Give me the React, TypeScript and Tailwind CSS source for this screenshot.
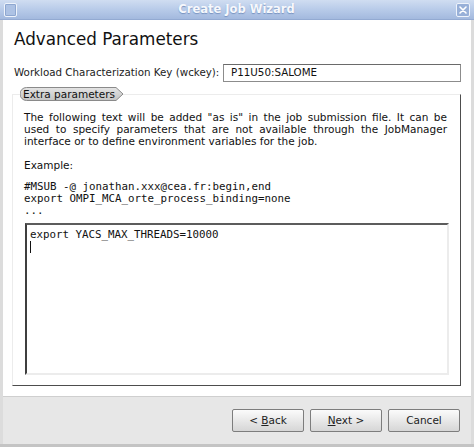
const sans = { fontFamily: '"DejaVu Sans", "Liberation Sans", sans-serif' };
const mono = { fontFamily: '"DejaVu Sans Mono", "Liberation Mono", monospace' };

function TitleBar() {
  return (
    <div className="relative flex h-[20px] shrink-0 items-center justify-between border-b border-[#93aad2] bg-gradient-to-b from-[#d0ddf1] via-[#b8cbe9] to-[#a3b9de] px-[4px]">
      <div className="h-[14px] w-[13px] rounded-[2px] border border-[#eef3fb] bg-[#adc2e4] shadow-[inset_0_0_0_1px_#8ea7d0]" />
      <span className="text-[11.5px] font-bold text-[#f6f8fc] [text-shadow:0_1px_1px_#7893c0]">Create Job Wizard</span>
      <div className="flex h-[14px] w-[14px] items-center justify-center rounded-[2px] border border-[#eef3fb] bg-[#98b0d8]">
        <svg width="10" height="10" viewBox="0 0 10 10">
          <path d="M2 2 L8 8 M8 2 L2 8" stroke="#ffffff" strokeWidth="1.6" strokeLinecap="round" />
        </svg>
      </div>
    </div>
  );
}

function WizardButton({ children }: { children: React.ReactNode }) {
  return (
    <button
      type="button"
      className="flex h-[23px] w-[72px] items-center justify-center rounded-[2px] border border-[#7d7d7d] bg-gradient-to-b from-[#fbfbfb] to-[#d6d6d6] text-[10.5px] text-[#222]"
    >
      <span className="whitespace-pre">{children}</span>
    </button>
  );
}

function ExtraTab() {
  return (
    <div className="relative z-10 ml-[8px] flex h-[14px] w-[104px] items-center pl-[3px]">
      <svg className="absolute inset-0" width="104" height="14" viewBox="0 0 104 14">
        <defs>
          <linearGradient id="tabg" x1="0" y1="0" x2="0" y2="1">
            <stop offset="0" stopColor="#e4e4e4" />
            <stop offset="1" stopColor="#c4c4c4" />
          </linearGradient>
        </defs>
        <path d="M6.5 0.5 H96 L103 7 L96 13.5 H6.5 A6.5 6.5 0 0 1 6.5 0.5 Z" fill="url(#tabg)" stroke="#8a8a8a" />
      </svg>
      <span className="relative text-[10.5px] leading-none text-[#111]">Extra parameters</span>
    </div>
  );
}

// lines are broken as in the original label, first two stretched to full width
const lines = [
  'The following text will be added "as is" in the job submission file. It can be',
  "used to specify parameters that are not available through the JobManager",
];

export default function App() {
  return (
    <div className="flex h-[447px] w-[474px] flex-col overflow-hidden bg-white" style={sans}>
      <TitleBar />
      <div className="flex flex-1 flex-col border-x-[3px] border-[#dcdcdc] bg-white">
        <div className="flex h-[39px] items-center pl-[11px]">
          <h1 className="text-[16.8px] text-[#111]">Advanced Parameters</h1>
        </div>

        <div className="mt-[5px] flex h-[18px] items-center pl-[11px] pr-[10px]">
          <span className="text-[10.3px] text-[#222]">Workload Characterization Key (wckey):</span>
          <div className="ml-auto flex h-[18px] w-[238px] items-center border border-[#8c8c8c] border-t-[#6a6a6a] bg-white pl-[7px] text-[10.3px] text-[#111]">
            P11U50:SALOME
          </div>
        </div>

        <div className="mt-[5px] ml-[9px] w-[449px]">
          <ExtraTab />
          <div className="-mt-[7px] h-[292px] border border-[#ececec] border-r-[#4d4d4d] border-b-[#4d4d4d] pl-[11px] pr-[12px] pt-[16px]">
            <div className="w-[423px] text-[10.5px] leading-[12px] text-[#111]">
              {lines.map((l) => (
                <div key={l} className="text-justify [text-align-last:justify]">
                  {l}
                </div>
              ))}
              <div>interface or to define environment variables for the job.</div>
            </div>
            <p className="mt-[12px] text-[10.5px] leading-[12px] text-[#111]">Example:</p>
            <div className="mt-[10px] text-[10.8px] leading-[12px] text-[#111]" style={mono}>
              <div>#MSUB -@ jonathan.xxx@cea.fr:begin,end</div>
              <div>export OMPI_MCA_orte_process_binding=none</div>
              <div>...</div>
            </div>
            <div
              className="mt-[6px] ml-[1px] h-[152px] w-[424px] border-2 border-t-[#5c5c5c] border-l-[#3f3f3f] border-r-[#ececec] border-b-[#ececec] bg-white pl-[3px] pt-[4px] text-[10.8px] leading-[12px] text-[#111]"
              style={mono}
            >
              <div>export YACS_MAX_THREADS=10000</div>
              <div className="h-[12px] w-px bg-[#111]" />
            </div>
          </div>
        </div>

        <div className="mt-[10px] flex-1 border-t border-[#cfcfcf] bg-[#e7e7e7]">
          <div className="flex justify-end gap-[6px] pr-[11px] pt-[12px]">
            <WizardButton>
              {"< "}
              <span className="underline">B</span>
              {"ack"}
            </WizardButton>
            <WizardButton>
              <span className="underline">N</span>
              {"ext >"}
            </WizardButton>
            <WizardButton>Cancel</WizardButton>
          </div>
        </div>
      </div>
      <div className="h-[3px] shrink-0 bg-[#c4c4c4]" />
    </div>
  );
}
